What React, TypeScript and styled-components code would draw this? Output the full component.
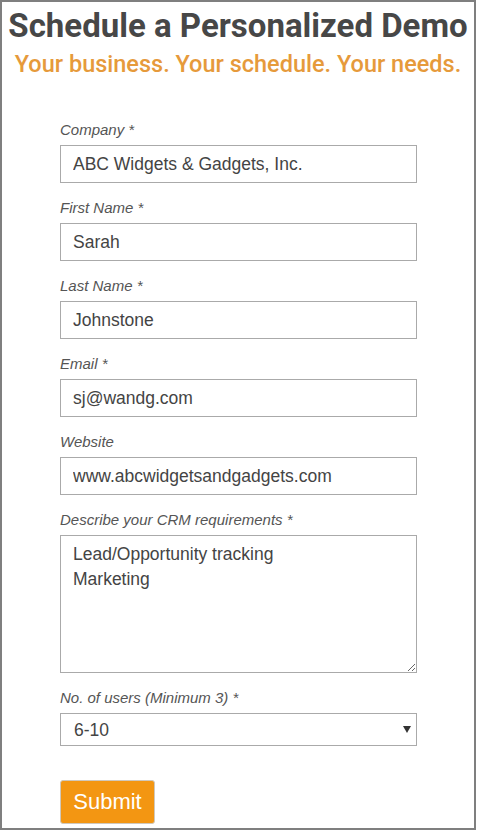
import React from "react";
import styled, { createGlobalStyle } from "styled-components";

const GlobalStyle = createGlobalStyle`
  html, body { margin: 0; padding: 0; background: #ffffff; }
  * { box-sizing: border-box; }
`;

const Frame = styled.div`
  width: 476px;
  height: 830px;
  border: 2px solid #7f7f7f;
  display: flex;
  flex-direction: column;
  overflow: hidden;
  background: #ffffff;
`;

const Header = styled.header`
  display: flex;
  flex-direction: column;
  align-items: center;
  padding-top: 5px;
`;

const Title = styled.h1`
  margin: 0;
  font-family: Roboto, "Liberation Sans", sans-serif;
  font-weight: 700;
  font-size: 33px;
  line-height: 38px;
  color: #474747;
  white-space: nowrap;
`;

const Subtitle = styled.h2`
  margin: 5px 0 0;
  font-family: Roboto, "Liberation Sans", sans-serif;
  font-weight: 500;
  font-size: 23.5px;
  line-height: 28px;
  color: #e69a3b;
  white-space: nowrap;
`;

const Form = styled.form`
  display: flex;
  flex-direction: column;
  width: 357px;
  margin: 42px 0 0 58px;
`;

const Field = styled.div`
  display: flex;
  flex-direction: column;
  margin-bottom: 15px;
`;

const Label = styled.label`
  font-family: "Liberation Sans", Arial, sans-serif;
  font-style: italic;
  font-size: 15px;
  line-height: 20px;
  color: #555555;
  margin-bottom: 5px;
`;

const TextInput = styled.input`
  width: 357px;
  height: 38px;
  border: 1px solid #aaaaaa;
  border-radius: 0;
  padding: 0 12px;
  font-family: "Liberation Sans", Arial, sans-serif;
  font-size: 17.5px;
  color: #444444;
  background: #ffffff;
  outline: none;
`;

const TextArea = styled.textarea`
  width: 357px;
  height: 138px;
  border: 1px solid #aaaaaa;
  border-radius: 0;
  padding: 6px 12px;
  font-family: "Liberation Sans", Arial, sans-serif;
  font-size: 17.5px;
  line-height: 25px;
  color: #444444;
  background: #ffffff;
  outline: none;
  resize: both;
`;

const SelectWrap = styled.div`
  position: relative;
  width: 357px;
`;

const Select = styled.select`
  appearance: none;
  -webkit-appearance: none;
  width: 357px;
  height: 33px;
  border: 1px solid #aaaaaa;
  border-radius: 0;
  padding: 0 13px;
  font-family: "Liberation Sans", Arial, sans-serif;
  font-size: 17.5px;
  color: #444444;
  background: #ffffff;
  outline: none;
`;

const Arrow = styled.span`
  position: absolute;
  right: 6px;
  top: 13px;
  width: 0;
  height: 0;
  border-left: 4px solid transparent;
  border-right: 4px solid transparent;
  border-top: 7px solid #333333;
  pointer-events: none;
`;

const SubmitButton = styled.button`
  align-self: flex-start;
  margin-top: 19px;
  width: 95px;
  height: 44px;
  border: 1px solid #d0c8bc;
  border-radius: 3px;
  background: #f39612;
  color: #ffffff;
  font-family: "Liberation Sans", Arial, sans-serif;
  font-size: 22px;
  padding: 0;
  cursor: pointer;
`;

export default function App() {
  return (
    <>
      <GlobalStyle />
      <Frame>
        <Header>
          <Title>Schedule a Personalized Demo</Title>
          <Subtitle>Your business. Your schedule. Your needs.</Subtitle>
        </Header>
        <Form onSubmit={(e) => e.preventDefault()}>
          <Field>
            <Label>Company *</Label>
            <TextInput defaultValue="ABC Widgets & Gadgets, Inc." />
          </Field>
          <Field>
            <Label>First Name *</Label>
            <TextInput defaultValue="Sarah" />
          </Field>
          <Field>
            <Label>Last Name *</Label>
            <TextInput defaultValue="Johnstone" />
          </Field>
          <Field>
            <Label>Email *</Label>
            <TextInput defaultValue="sj@wandg.com" />
          </Field>
          <Field>
            <Label>Website</Label>
            <TextInput defaultValue="www.abcwidgetsandgadgets.com" />
          </Field>
          <Field>
            <Label>Describe your CRM requirements *</Label>
            <TextArea defaultValue={"Lead/Opportunity tracking\nMarketing"} />
          </Field>
          <Field>
            <Label>No. of users (Minimum 3) *</Label>
            <SelectWrap>
              <Select defaultValue="6-10">
                <option value="3-5">3-5</option>
                <option value="6-10">6-10</option>
                <option value="11-25">11-25</option>
                <option value="26+">26+</option>
              </Select>
              <Arrow />
            </SelectWrap>
          </Field>
          <SubmitButton type="submit">Submit</SubmitButton>
        </Form>
      </Frame>
    </>
  );
}
